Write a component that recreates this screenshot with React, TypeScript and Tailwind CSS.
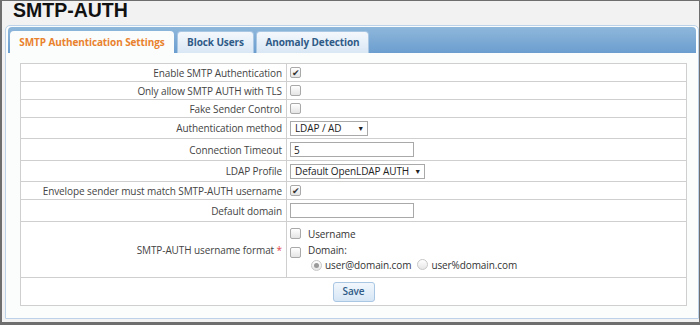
import React from 'react';

const font = { fontFamily: '"Open Sans", "Liberation Sans", sans-serif' };

function Check({ checked = false }: { checked?: boolean }) {
  return (
    <span className="inline-flex items-center justify-center w-[11px] h-[11px] border border-[#a9a9a9] rounded-[2px] bg-gradient-to-b from-white to-[#e4e4e4] text-[#333] text-[9px] leading-none">
      {checked ? '✔' : ''}
    </span>
  );
}

function Radio({ checked = false }: { checked?: boolean }) {
  return (
    <span className="inline-flex items-center justify-center w-[11px] h-[11px] rounded-full border border-[#c8c8c8] bg-gradient-to-b from-white to-[#e6e6e6]">
      {checked && <span className="w-[5px] h-[5px] rounded-full bg-[#9a9a9a]" />}
    </span>
  );
}

function Select({ value, width }: { value: string; width: string }) {
  return (
    <span className={`inline-flex items-center justify-between h-[15px] border border-[#a9a9a9] bg-white pl-[4px] pr-[3px] text-[10px] text-[#222] whitespace-nowrap ${width}`}>
      <span>{value}</span>
      <span className="text-[7px]">▼</span>
    </span>
  );
}

function TextBox({ value = '' }: { value?: string }) {
  return (
    <span className="inline-flex items-center w-[124px] h-[15px] border border-[#a9a9a9] bg-white pl-[3px] text-[10px] text-[#222]">
      {value}
    </span>
  );
}

type Row = { label: string; h: string; field: React.ReactNode };

const rows: Row[] = [
  { label: 'Enable SMTP Authentication', h: 'h-[18px]', field: <Check checked /> },
  { label: 'Only allow SMTP AUTH with TLS', h: 'h-[18px]', field: <Check /> },
  { label: 'Fake Sender Control', h: 'h-[18px]', field: <Check /> },
  { label: 'Authentication method', h: 'h-[21px]', field: <Select value="LDAP / AD" width="w-[78px]" /> },
  { label: 'Connection Timeout', h: 'h-[22px]', field: <TextBox value="5" /> },
  { label: 'LDAP Profile', h: 'h-[21px]', field: <Select value="Default OpenLDAP AUTH" width="w-[135px]" /> },
  { label: 'Envelope sender must match SMTP-AUTH username', h: 'h-[18px]', field: <Check checked /> },
  { label: 'Default domain', h: 'h-[22px]', field: <TextBox /> },
];

export default function App() {
  return (
    <div
      className="w-[700px] h-[325px] bg-[#f2f2f2] border-l-2 border-t border-r border-b-[3px] border-[#6e6e6e] flex flex-col overflow-hidden"
      style={font}
    >
      <h1
        className="h-[24px] pl-[11px] text-[19.5px] font-bold leading-none text-[#111]"
        style={{ fontFamily: '"Liberation Sans", Arial, sans-serif' }}
      >
        SMTP-AUTH
      </h1>

      <div className="flex-1 ml-[3px] mb-[3px] border border-[#bcd2e8] rounded-t-[5px] bg-[#fbfdfd] pt-[1px] px-[2px] flex flex-col">
        <div className="h-[26px] rounded-t-[4px] bg-gradient-to-b from-[#8fb7db] to-[#6b9ecf] flex items-end pl-[2px] gap-[2px] text-[10px] font-bold tracking-[-0.1px] whitespace-nowrap">
          <div className="w-[164px] h-[22px] rounded-t-[4px] bg-[#fbfdfd] flex items-center justify-center text-[#e9822e]">
            SMTP Authentication Settings
          </div>
          <div className="ml-[1px] w-[77px] h-[22px] rounded-t-[4px] border border-b-0 border-[#a9c6e3] bg-gradient-to-b from-[#f4f8fc] to-[#d9e7f5] flex items-center justify-center text-[#2f5b87]">
            Block Users
          </div>
          <div className="w-[113px] h-[22px] rounded-t-[4px] border border-b-0 border-[#a9c6e3] bg-gradient-to-b from-[#f4f8fc] to-[#d9e7f5] flex items-center justify-center text-[#2f5b87]">
            Anomaly Detection
          </div>
        </div>

        <div className="pl-[12px] pr-[9px] pt-[10px]">
          <table className="w-full border-collapse bg-white text-[10px] tracking-[-0.1px]">
            <tbody>
              {rows.map((r) => (
                <tr key={r.label} className={r.h}>
                  <td className="w-[266px] border border-[#cfcfcf] text-right pr-[4px] text-[#444] leading-none whitespace-nowrap">
                    {r.label}
                  </td>
                  <td className="border border-[#cfcfcf] pl-[3px] leading-none">
                    <span className="flex items-center">{r.field}</span>
                  </td>
                </tr>
              ))}
              <tr className="h-[56px]">
                <td className="w-[266px] border border-[#cfcfcf] text-right pr-[4px] text-[#444] leading-none whitespace-nowrap">
                  SMTP-AUTH username format <span className="text-[#e0474c]">*</span>
                </td>
                <td className="border border-[#cfcfcf] pl-[3px] text-[#333] leading-none whitespace-nowrap">
                  <div className="flex flex-col gap-[6px]">
                    <div className="flex items-center gap-[7px]">
                      <Check />
                      <span>Username</span>
                    </div>
                    <div className="flex items-start gap-[7px]">
                      <span className="mt-[2px]">
                        <Check />
                      </span>
                      <div className="flex flex-col gap-[4px]">
                        <span>Domain:</span>
                        <div className="flex items-center">
                          <span className="ml-[3px]">
                            <Radio checked />
                          </span>
                          <span className="ml-[3px]">user@domain.com</span>
                          <span className="ml-[6px]">
                            <Radio />
                          </span>
                          <span className="ml-[3px]">user%domain.com</span>
                        </div>
                      </div>
                    </div>
                  </div>
                </td>
              </tr>
              <tr className="h-[28px]">
                <td colSpan={2} className="border border-[#cfcfcf] text-center">
                  <button className="w-[42px] h-[20px] rounded-[3px] border border-[#a9c6e3] bg-gradient-to-b from-[#f2f7fc] to-[#d6e6f5] text-[10px] font-semibold text-[#2f5b87]">
                    Save
                  </button>
                </td>
              </tr>
            </tbody>
          </table>
        </div>
      </div>
    </div>
  );
}
